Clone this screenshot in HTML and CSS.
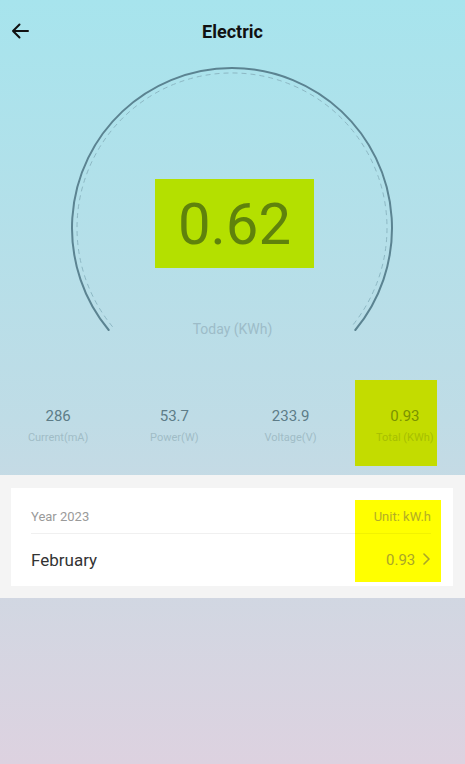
FILE: index.html
```html
<!DOCTYPE html>
<html lang="en">
<head>
    <meta charset="UTF-8">
    <meta name="viewport" content="width=device-width, initial-scale=1.0">
    <title>Electric</title>
    <link rel="stylesheet" href="styles.css">
</head>
<body>
    <div class="header">
        <span class="back">
            <svg width="18" height="16" viewBox="0 0 18 16">
                <path d="M17 8H2M8.5 1.5L2 8l6.5 6.5" fill="none" stroke="#111" stroke-width="2" stroke-linecap="round" stroke-linejoin="round"/>
            </svg>
        </span>
        <h1>Electric</h1>
    </div>

    <div class="gauge">
        <svg class="gauge-arc" width="340" height="280" viewBox="0 0 340 280">
            <!-- outer solid arc -->
            <path d="M45.7 268 A160 160 0 1 1 292.3 268" fill="none" stroke="#5b8391" stroke-width="2" stroke-linecap="round"/>
            <!-- inner dashed arc -->
            <path d="M49.6 264.8 A155 155 0 1 1 288.4 264.8" fill="none" stroke="#8db8c4" stroke-width="1" stroke-dasharray="5 4"/>
        </svg>
        <div class="gauge-content">
            <div class="today-value">0.62</div>
            <div class="today-label">Today (KWh)</div>
        </div>
    </div>

    <div class="stats">
        <div class="stat">
            <div class="stat-value">286</div>
            <div class="stat-label">Current(mA)</div>
        </div>
        <div class="stat">
            <div class="stat-value">53.7</div>
            <div class="stat-label">Power(W)</div>
        </div>
        <div class="stat">
            <div class="stat-value">233.9</div>
            <div class="stat-label">Voltage(V)</div>
        </div>
        <div class="stat marked">
            <div class="stat-value">0.93</div>
            <div class="stat-label">Total (KWh)</div>
        </div>
    </div>

    <div class="history">
        <div class="card">
            <div class="card-left">
                <div class="row row-head">Year 2023</div>
                <div class="row row-month">February</div>
            </div>
            <div class="card-right">
                <div class="row row-head">Unit: kW.h</div>
                <div class="row row-month">0.93
                    <svg class="chev" width="7" height="12" viewBox="0 0 7 12">
                        <path d="M1 1l5 5-5 5" fill="none" stroke="#aaa628" stroke-width="1.6" stroke-linecap="round" stroke-linejoin="round"/>
                    </svg>
                </div>
            </div>
        </div>
    </div>
</body>
</html>
```

FILE: styles.css
```css
body {
    margin: 0;
    min-height: 764px;
    font-family: Roboto, "Noto Sans", Arial, sans-serif;
    background: linear-gradient(180deg, #a7e4ed 0%, #bfdce6 55%, #d1d7e2 78%, #ddd2e0 100%);
}
.header {
    height: 62px;
    display: flex;
    align-items: center;
    justify-content: center;
    position: relative;
}
.header h1 {
    margin: 0;
    font-size: 18px;
    font-weight: 700;
    color: #111;
}
.back {
    position: absolute; /* sits over the header bar */
    left: 11px;
    top: 23px;
    display: flex;
}
.gauge {
    height: 280px;
    display: grid;
    justify-content: center;
}
.gauge-arc,
.gauge-content {
    grid-area: 1 / 1;
}
.gauge-content {
    display: flex;
    flex-direction: column;
    align-items: center;
    padding-top: 117px;
}
.today-value {
    width: 159px;
    height: 89px;
    margin-left: 4px;
    background: #b4e000;
    color: #5f820c;
    font-size: 58px;
    display: flex;
    align-items: center;
    justify-content: center;
}
.today-label {
    margin-top: 53px;
    font-size: 14px;
    line-height: 17px;
    color: #9dbcc8;
}
.stats {
    display: grid;
    grid-template-columns: repeat(4, 1fr);
    padding-top: 38px;
    height: 86px;
    margin-bottom: 9px;
}
.stat {
    text-align: center;
    padding-top: 26px;
    position: relative;
}
.stat-value {
    font-size: 15px;
    line-height: 20px;
    color: #5d7c88;
}
.stat-label {
    margin-top: 4px;
    font-size: 11px;
    line-height: 16px;
    color: #a0bcc6;
}
.stat.marked {
    margin: 0 28px 0 6px;
    padding-left: 18px;
    background: #c3dc00;
}
.stat.marked .stat-value {
    color: #7b9300;
}
.stat.marked .stat-label {
    color: #a7bf00;
    white-space: nowrap;
}
.history {
    background: #f4f4f4;
    padding: 13px 12px 12px 11px;
}
.card {
    background: #fff;
    display: flex;
    padding: 12px 12px 4px 20px;
}
.card-left {
    flex: 1;
}
.card-right {
    width: 76px;
    padding-right: 10px;
    background: #ffff00;
    text-align: right;
}
.row-head {
    height: 33px;
    line-height: 34px;
    font-size: 13px;
    color: #9a9a9a;
    border-bottom: 1px solid #f0f0f0;
}
.row-month {
    height: 48px;
    line-height: 52px;
    font-size: 17px;
    color: #333;
}
.card-right .row-head {
    color: #b3ae25;
    border-bottom-color: #f2f200;
}
.card-right .row-month {
    font-size: 15px;
    color: #aaa628;
}
.chev {
    margin-left: 4px;
    margin-right: 1px;
}
```
